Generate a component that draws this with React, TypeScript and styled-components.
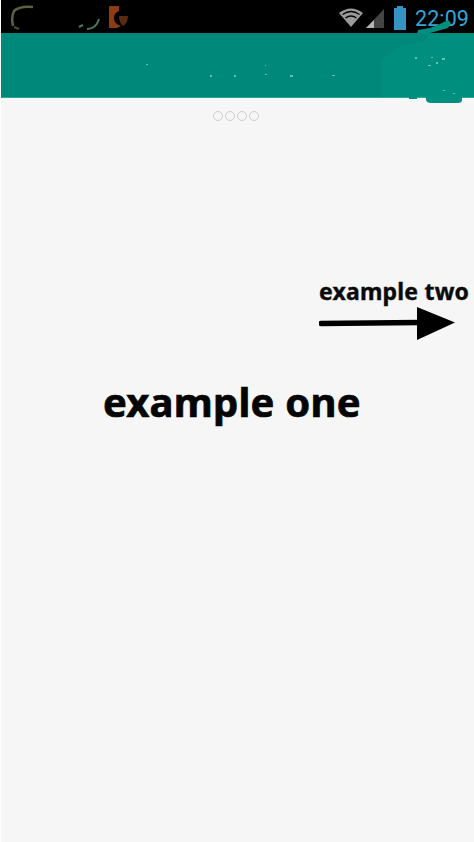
import styled, { createGlobalStyle } from "styled-components";

const GlobalStyle = createGlobalStyle`
  html, body {
    margin: 0;
    padding: 0;
    background: #f6f6f6;
  }
`;

const Screen = styled.div`
  width: 474px;
  height: 842px;
  overflow: hidden;
  display: flex;
  flex-direction: column;
  background: #f6f6f6;
  border-left: 1px solid #fff;
  box-sizing: border-box;
  font-family: "Noto Sans", "DejaVu Sans", sans-serif;
`;

const StatusBar = styled.div`
  height: 33px;
  margin-left: -1px;
  flex: none;
  background: #000;
  display: flex;
  align-items: center;
  padding: 3px 5px 0 11px;
  box-sizing: border-box;
`;

const LeftIcons = styled.div`
  display: flex;
  align-items: center;
  flex: 1;
`;

const RightIcons = styled.div`
  display: flex;
  align-items: center;
`;

const Clock = styled.span`
  font-family: Roboto, sans-serif;
  font-size: 21.5px;
  color: #33a5d8;
  margin-left: 8px;
  letter-spacing: 0.1px;
`;

const Toolbar = styled.div`
  position: relative;
  height: 65px;
  margin-left: -1px;
  flex: none;
  background: #00897a;
  border-bottom: 1px solid #29a596;
  box-sizing: border-box;
`;

const Scribble = styled.svg`
  position: absolute;
  left: 0;
  top: -33px;
  overflow: visible;
`;

const Body = styled.div`
  flex: 1;
  display: flex;
  flex-direction: column;
`;

const Dots = styled.div`
  display: flex;
  justify-content: center;
  gap: 2px;
  margin-top: 13px;
  padding-right: 3px;
`;

const Dot = styled.span`
  width: 10px;
  height: 10px;
  box-sizing: border-box;
  border: 1px solid #cfcfcf;
  border-radius: 50%;
`;

const Callout = styled.div`
  align-self: flex-end;
  width: 155px;
  margin-top: 157px;
  display: flex;
  flex-direction: column;
`;

const CalloutLabel = styled.span`
  font-size: 23px;
  line-height: 26px;
  font-weight: 700;
  letter-spacing: 0.2px;
  color: #0a0a0a;
  white-space: nowrap;
  -webkit-text-stroke: 0.4px #0a0a0a;
`;

const Arrow = styled.svg`
  display: block;
  margin-top: 2px;
`;

const Heading = styled.h1`
  margin: 37px 0 0 102px;
  font-size: 40px;
  line-height: 46px;
  font-weight: 700;
  letter-spacing: 0.2px;
  color: #050505;
  white-space: nowrap;
  -webkit-text-stroke: 0.7px #050505;
`;

function App() {
  return (
    <>
      <GlobalStyle />
      <Screen>
        <StatusBar>
          <LeftIcons>
            <svg width="120" height="26" viewBox="0 0 120 26">
              <path d="M2 21 Q0 12 3 6 Q8 1 22 2" fill="none" stroke="#5f6040" strokeWidth="2.5" />
              <path d="M3 22 L8 24" fill="none" stroke="#4a4b33" strokeWidth="2" />
              <path d="M68 22 L72 20 M76 24 Q85 24 88 14" fill="none" stroke="#4d7a5c" strokeWidth="2" />
              <path d="M98 1 H108 V6 Q103 8 103 13 Q103 19 110 21 L106 23 L98 23 Z" fill="#8c3b12" />
              <path d="M108 11 H117 Q117 18 112 21 Q108 18 108 11 Z" fill="#5b2a12" />
            </svg>
          </LeftIcons>
          <RightIcons>
            <svg width="26" height="20" viewBox="0 0 26 20">
              <path d="M1 5 Q13 -4 25 5 L13 19 Z" fill="#9a9a9a" />
              <path d="M4.5 6.5 Q13 0.5 21.5 6.5 M7.5 10 Q13 6 18.5 10" fill="none" stroke="#000" strokeWidth="1.3" />
            </svg>
            <svg width="20" height="20" viewBox="0 0 20 20" style={{ marginLeft: 2 }}>
              <path d="M0 20 L18 1 V20 Z" fill="#444" />
              <path d="M0 20 L8 12 V20 Z" fill="#b5b5b5" />
            </svg>
            <svg width="14" height="24" viewBox="0 0 14 24" style={{ marginLeft: 7 }}>
              <path d="M4 0 H10 V2 H13 V24 H1 V2 H4 Z" fill="#3694c4" />
            </svg>
            <Clock>22:09</Clock>
          </RightIcons>
        </StatusBar>
        <Toolbar>
          <Scribble width="474" height="110" viewBox="0 0 474 110">
            <path
              d="M417 34 L418 30 L430 28 L440 24 L448 20 L451 23 L448 28 L430 33 L424 42 L400 46 L381 60 L381 97 L474 97 L474 33 Z"
              fill="#008f7e"
            />
            <path d="M426 96 H462 V101 Q461 103 458 103 H431 Q427 103 426 100 Z M409 96 H417 V99 H409 Z" fill="#008f7e" />
            <g fill="#5cc4b4">
              <rect x="146" y="64" width="2" height="1" />
              <rect x="210" y="75" width="2" height="2" />
              <rect x="234" y="75" width="2" height="2" />
              <rect x="265" y="65" width="1" height="1" />
              <rect x="265" y="74" width="2" height="1" />
              <rect x="290" y="75" width="3" height="2" />
              <rect x="332" y="75" width="3" height="1" />
              <rect x="415" y="57" width="2" height="2" />
              <rect x="431" y="57" width="2" height="1" />
              <rect x="428" y="65" width="3" height="1" />
              <rect x="436" y="62" width="2" height="2" />
              <rect x="442" y="58" width="3" height="2" />
              <rect x="443" y="90" width="2" height="1" />
              <rect x="453" y="93" width="2" height="1" />
            </g>
          </Scribble>
        </Toolbar>
        <Body>
          <Dots>
            <Dot />
            <Dot />
            <Dot />
            <Dot />
          </Dots>
          <Callout>
            <CalloutLabel>example two</CalloutLabel>
            <Arrow width="155" height="36" viewBox="0 0 155 36">
              <path d="M2 17.5 L100 16.5" stroke="#000" strokeWidth="5.5" strokeLinecap="round" />
              <path d="M98 1 L136 16.5 L98 34 Z" fill="#000" />
            </Arrow>
          </Callout>
          <Heading>example one</Heading>
        </Body>
      </Screen>
    </>
  );
}

export default App;
